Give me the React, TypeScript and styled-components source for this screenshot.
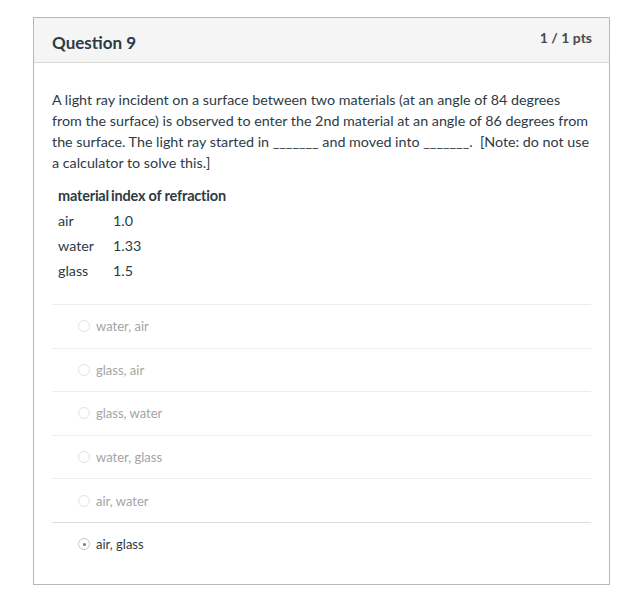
import React from "react";
import styled, { createGlobalStyle } from "styled-components";

const Global = createGlobalStyle`
  html, body { margin: 0; padding: 0; background: #ffffff; }
  body { font-family: Lato, "Open Sans", "Liberation Sans", sans-serif; color: #2d3b45; }
`;

const Page = styled.div`
  width: 640px;
  height: 601px;
  padding: 17px 0 0 33px;
  box-sizing: border-box;
`;

const Card = styled.div`
  width: 577px;
  height: 568px;
  box-sizing: border-box;
  border: 1px solid #b7b7b7;
  display: flex;
  flex-direction: column;
`;

const Header = styled.div`
  height: 44px;
  background: #f5f5f5;
  border-bottom: 1px solid #d8d8d8;
  display: flex;
  justify-content: space-between;
  align-items: flex-start;
  padding: 0 17px 0 18px;
`;

const Title = styled.div`
  font-size: 17px;
  font-weight: 700;
  color: #2d3b45;
  margin-top: 14px;
`;

const Points = styled.div`
  font-size: 14px;
  font-weight: 700;
  color: #4a4a4a;
  margin-top: 11px;
`;

const Body = styled.div`
  padding: 26px 18px 0 18px;
`;

const Prompt = styled.p`
  margin: 0;
  font-size: 14.3px;
  line-height: 21px;
  color: #2d3b45;
`;

const Table = styled.div`
  display: grid;
  grid-template-columns: 53px auto;
  margin: 10px 0 0 6px;
  font-size: 14.3px;
  color: #2d3b45;
`;

const HeadCell = styled.div`
  font-weight: 700;
  font-size: 14.5px;
  height: 25px;
  line-height: 25px;
  letter-spacing: -0.2px;
  white-space: nowrap;
`;

const Cell = styled.div<{ $num?: boolean }>`
  height: 25px;
  line-height: 25px;
  padding-left: ${(p) => (p.$num ? "2px" : "0")};
`;

const Answers = styled.div`
  margin-top: 21px;
`;

const Answer = styled.div<{ $selected?: boolean }>`
  height: 42.6px;
  border-top: 1px solid ${(p) => (p.$selected ? "#dcdcdc" : "#ececec")};
  display: flex;
  align-items: center;
  padding-left: 26px;
  gap: 6px;
  font-size: 13px;
  color: ${(p) => (p.$selected ? "#2d3b45" : "#a4a4a4")};
`;

const Radio = styled.span<{ $selected?: boolean }>`
  width: 12px;
  height: 12px;
  box-sizing: border-box;
  border-radius: 50%;
  border: 1px solid ${(p) => (p.$selected ? "#c8c8c8" : "#e2e2e2")};
  display: inline-flex;
  align-items: center;
  justify-content: center;
  &::after {
    content: "";
    display: ${(p) => (p.$selected ? "block" : "none")};
    width: 3px;
    height: 3px;
    border-radius: 50%;
    background: #777;
  }
`;

const rows: [string, string][] = [
  ["air", "1.0"],
  ["water", "1.33"],
  ["glass", "1.5"],
];

const options = ["water, air", "glass, air", "glass, water", "water, glass", "air, water", "air, glass"];

export default function App() {
  return (
    <>
      <Global />
      <Page>
        <Card>
          <Header>
            <Title>Question 9</Title>
            <Points>1 / 1 pts</Points>
          </Header>
          <Body>
            <Prompt>
              A light ray incident on a surface between two materials (at an angle of 84 degrees from the
              surface) is observed to enter the 2nd material at an angle of 86 degrees from the surface. The
              light ray started in _______ and moved into _______.&nbsp; [Note: do not use a calculator to
              solve this.]
            </Prompt>
            <Table>
              <HeadCell>material</HeadCell>
              <HeadCell>index of refraction</HeadCell>
              {rows.map(([m, n]) => (
                <React.Fragment key={m}>
                  <Cell>{m}</Cell>
                  <Cell $num>{n}</Cell>
                </React.Fragment>
              ))}
            </Table>
            <Answers>
              {options.map((o, i) => {
                const sel = i === options.length - 1;
                return (
                  <Answer key={o} $selected={sel}>
                    <Radio $selected={sel} />
                    {o}
                  </Answer>
                );
              })}
            </Answers>
          </Body>
        </Card>
      </Page>
    </>
  );
}
